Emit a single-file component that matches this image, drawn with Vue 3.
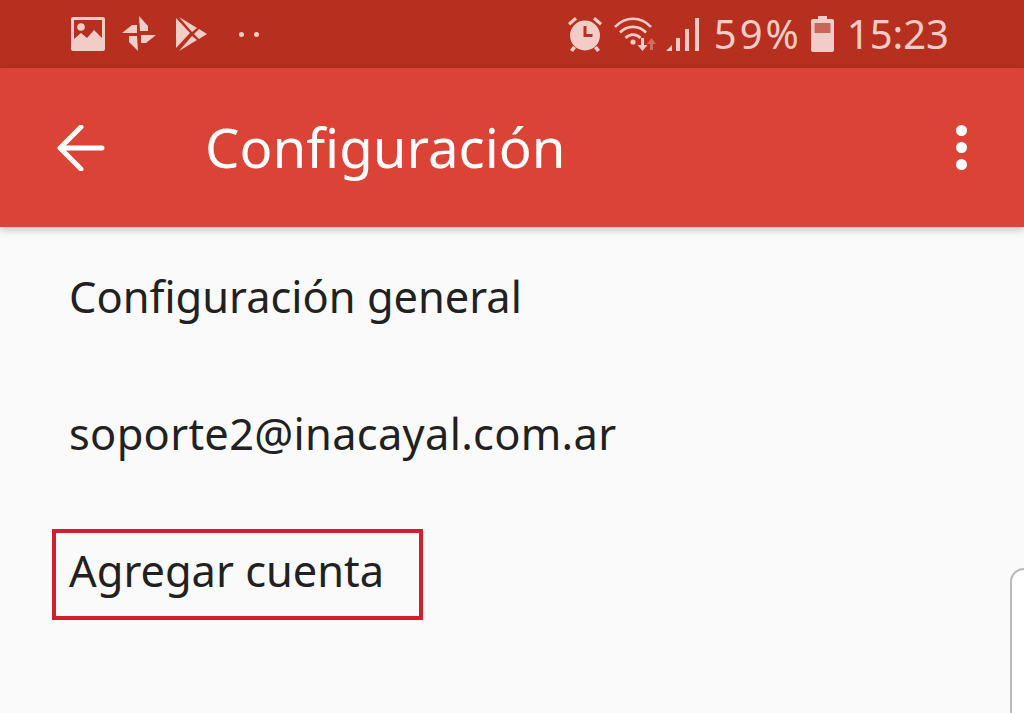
<script setup>
const rows = ['Configuración general', 'soporte2@inacayal.com.ar']
</script>

<template>
  <div class="screen">
    <div class="status">
      <div class="status-left">
        <svg class="ico-image" width="34" height="34" viewBox="0 0 34 34">
          <path fill="#f2cdc8" fill-rule="evenodd" d="M2 0h30a2 2 0 0 1 2 2v30a2 2 0 0 1-2 2H2a2 2 0 0 1-2-2V2a2 2 0 0 1 2-2zM3 3v19l7-6 6 5 7-8 8 8V3z" />
          <circle cx="10" cy="10" r="3.8" fill="#f2cdc8" />
        </svg>
        <svg class="ico-pin" width="35" height="36" viewBox="0 0 35 36">
          <g fill="#f2cdc8">
            <path d="M0 17 L10 9 H15 V17z" />
            <path d="M17 0 L26 10 V15 H18z" />
            <path d="M34 19 L24 27 H19 V19z" />
            <path d="M16 35 L7 26 V20 H15z" />
          </g>
        </svg>
        <svg class="ico-play" width="31" height="34" viewBox="0 0 31 34">
          <g fill="#f2cdc8">
            <path d="M0 1 L14 16 L0 31z" />
            <path d="M3 0 L21 11 L16 15z" />
            <path d="M23 12 L31 17 L23 22 L18 17z" />
            <path d="M16 19 L21 23 L3 34z" />
          </g>
        </svg>
        <span class="dot first"></span>
        <span class="dot"></span>
      </div>
      <div class="status-right">
        <svg class="ico-alarm" width="36" height="36" viewBox="0 0 36 36">
          <g fill="#f2cdc8">
            <path d="M1 7 L8 1 L10 3.5 L3 9.5z" />
            <path d="M35 7 L28 1 L26 3.5 L33 9.5z" />
            <path d="M6 30 L3 34 L6 36 L9 32z" />
            <path d="M30 30 L33 34 L30 36 L27 32z" />
            <path fill-rule="evenodd" d="M18 4.500a15 15 0 1 1 0 30 15 15 0 0 1 0-30zM16.500 10v11h9v-3h-6v-8z" />
          </g>
        </svg>
        <svg class="ico-wifi" width="42" height="36" viewBox="0 0 42 36">
          <g fill="none" stroke="#f2cdc8" stroke-width="2.600">
            <path d="M1 11C11 0 27 0 37 11" />
            <path d="M6 16.500C13 9 25 9 32 16.500" />
            <path d="M11.500 22C16 17.500 22 17.500 26.500 22" />
          </g>
          <circle cx="19" cy="26" r="2.600" fill="#f2cdc8" />
          <path d="M27 22h3v7h3.500l-5 6-5-6H27z" fill="#f2cdc8" />
          <path d="M36 34v-6h-3l4.500-6 4.500 6h-3v6z" fill="#cf6d60" />
        </svg>
        <svg class="ico-signal" width="35" height="36" viewBox="0 0 35 36">
          <g fill="#f2cdc8">
            <path d="M0 35 L6 29 V35z" />
            <rect x="10" y="22" width="4" height="13" />
            <rect x="19" y="13" width="4" height="22" />
            <rect x="29" y="2" width="4" height="33" />
          </g>
        </svg>
        <span class="pct">59%</span>
        <svg class="ico-batt" width="23" height="36" viewBox="0 0 23 36">
          <path fill="#f2cdc8" d="M7 0h9v3h5a2 2 0 0 1 2 2v29a2 2 0 0 1-2 2H2a2 2 0 0 1-2-2V5a2 2 0 0 1 2-2h5z" />
          <rect x="3.500" y="7" width="16" height="10" fill="#c9665a" />
        </svg>
        <span class="time">15:23</span>
      </div>
    </div>

    <header class="appbar">
      <svg class="back" width="48" height="46" viewBox="0 0 48 46">
        <path d="M45 23H4M24 2 3 23l21 21" fill="none" stroke="#fff" stroke-width="5" stroke-linejoin="round" stroke-linecap="round" />
      </svg>
      <h1 class="title">Configuración</h1>
      <div class="more">
        <span></span><span></span><span></span>
      </div>
    </header>

    <ul class="list">
      <li v-for="row in rows" :key="row" class="row">{{ row }}</li>
      <li class="row">
        <span class="highlight">Agregar cuenta</span>
      </li>
    </ul>

    <div class="corner-card"></div>
  </div>
</template>

<style>
html,
body {
  margin: 0;
  overflow: hidden;
}
</style>

<style scoped>
.screen {
  position: relative;
  width: 1024px;
  height: 713px;
  overflow: hidden;
  background: #fafafa;
  font-family: "Noto Sans", "Open Sans", sans-serif;
}

.status {
  display: flex;
  justify-content: space-between;
  align-items: center;
  height: 68px;
  padding: 0 75px 0 71px;
  background: #b72f1f;
  box-sizing: border-box;
  color: #f2cdc8;
}

.status-left,
.status-right {
  display: flex;
  align-items: center;
}

.status svg {
  display: block;
}

.ico-pin {
  margin-left: 17px;
}

.ico-play {
  margin-left: 19px;
}

.dot {
  width: 5px;
  height: 5px;
  margin-left: 10px;
  border-radius: 50%;
  background: #f2cdc8;
}

.dot.first {
  margin-left: 32px;
}

.ico-wifi {
  margin-left: 11px;
}

.ico-signal {
  margin-left: 10px;
}

.pct {
  margin-left: 13px;
  font-size: 40px;
  letter-spacing: 3px;
  line-height: 68px;
}

.ico-batt {
  margin-left: 9px;
}

.time {
  margin-left: 13px;
  font-size: 40px;
  line-height: 68px;
}

.appbar {
  position: relative;
  display: flex;
  align-items: center;
  height: 159px;
  padding-left: 57px;
  box-sizing: border-box;
  background: #da4336;
  box-shadow: 0 3px 8px rgba(0, 0, 0, 0.22);
  color: #fff;
}

.back {
  display: block;
}

.title {
  margin: 0 0 0 100px;
  font-size: 54.6px;
  font-weight: 400;
  line-height: 1;
}

.more {
  display: flex;
  flex-direction: column;
  gap: 6px;
  margin-left: auto;
  margin-right: 57px;
}

.more span {
  width: 11px;
  height: 11px;
  border-radius: 50%;
  background: #fff;
}

.list {
  margin: 0;
  padding: 1px 0 0 69px;
  list-style: none;
  color: #212121;
  font-size: 43.4px;
}

.row {
  display: flex;
  align-items: center;
  height: 137px;
}

.row:nth-child(2) {
  letter-spacing: 0.3px;
}

.highlight {
  display: flex;
  align-items: center;
  width: 371px;
  height: 91px;
  margin-top: 7px;
  margin-left: -17px;
  padding-left: 13px;
  padding-bottom: 7px;
  box-sizing: border-box;
  border: 4px solid #d0202e;
}

.corner-card {
  position: absolute;
  left: 1010px;
  top: 568px;
  width: 60px;
  height: 200px;
  border: 2px solid #b9b9b9;
  border-radius: 14px;
  background: #fff;
}
</style>
